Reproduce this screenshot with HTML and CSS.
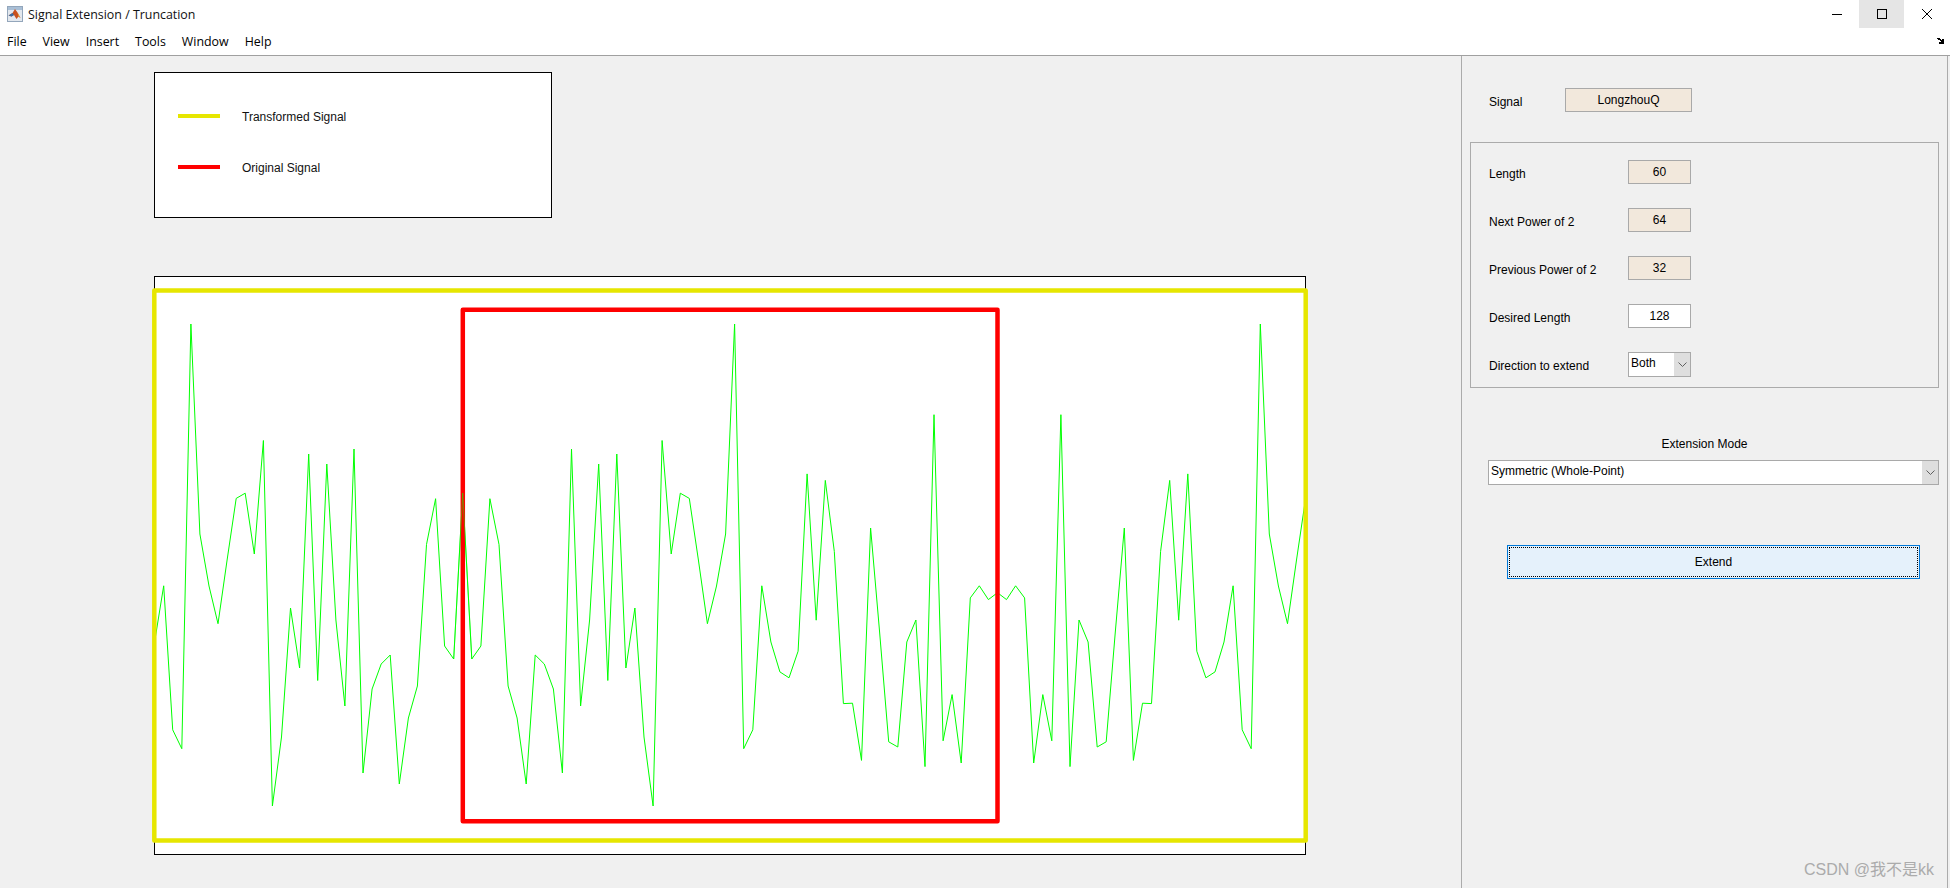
FILE: index.html
```html
<!DOCTYPE html>
<html lang="en">
<head>
    <meta charset="UTF-8">
    <title>Signal Extension / Truncation</title>
    <link rel="stylesheet" href="styles.css">
</head>
<body>

    <div class="titlebar">
        <svg class="app-icon" width="16" height="16" viewBox="0 0 16 16">
            <rect x="0.5" y="0.5" width="15" height="15" fill="#e3e8ee" stroke="#93a6bb"/>
            <rect x="1" y="1" width="14" height="3" fill="#a9bfd6"/>
            <path d="M1.5 9.5 L5.5 7 L8 3 L10.5 6.5 L13.5 12 L11.5 10.5 L9.5 13 L7 9 L4.5 10.5 Z" fill="#c9501c"/>
            <path d="M1.5 9.5 L5.5 7 L7 9 L4.5 10.5 Z" fill="#3a6ea5"/>
            <path d="M10.5 6.5 L13.5 12 L11.5 10.5 Z" fill="#e8a030"/>
        </svg>
        <span class="title-text">Signal Extension / Truncation</span>
        <div class="win-buttons">
            <div class="win-btn">
                <svg width="12" height="12" viewBox="0 0 12 12"><path d="M1 6.5H11" stroke="#000" fill="none"/></svg>
            </div>
            <div class="win-btn hovered">
                <svg width="12" height="12" viewBox="0 0 12 12"><rect x="1.5" y="1.5" width="9" height="9" stroke="#000" fill="none"/></svg>
            </div>
            <div class="win-btn">
                <svg width="12" height="12" viewBox="0 0 12 12"><path d="M1 1L11 11M11 1L1 11" stroke="#000" fill="none"/></svg>
            </div>
        </div>
    </div>

    <div class="menubar">
        <span class="menu-item">File</span>
        <span class="menu-item">View</span>
        <span class="menu-item">Insert</span>
        <span class="menu-item">Tools</span>
        <span class="menu-item">Window</span>
        <span class="menu-item">Help</span>
        <svg class="dock-arrow" width="8" height="7" viewBox="0 0 8 7">
            <path d="M0 0H3V1H4V2H5V1H7V6H2V4H4V3H3V2H1V1H0Z" fill="#000"/>
        </svg>
    </div>

    <div class="main">
        <div class="plots">
            <div class="legend">
                <div class="legend-row">
                    <span class="legend-line yellow"></span>
                    <span>Transformed Signal</span>
                </div>
                <div class="legend-row">
                    <span class="legend-line red"></span>
                    <span>Original Signal</span>
                </div>
            </div>

            <!-- viewBox is in window pixels so the traces can be read straight off the figure -->
            <svg class="axes" width="1153" height="579" viewBox="154 276 1153 579">
                <rect x="154.5" y="276.5" width="1151" height="578" fill="#fff" stroke="#000"/>
                <polyline id="trace" fill="none" stroke="#00ff00" stroke-width="1"/>
                <rect x="154.3" y="290.5" width="1151.4" height="550" fill="none" stroke="#e6e600" stroke-width="4.5" stroke-linejoin="round"/>
                <rect x="462.8" y="309.8" width="534.7" height="511.4" fill="none" stroke="#ff0000" stroke-width="4.5" stroke-linejoin="round"/>
                <!-- the first sample shows through the red edge -->
                <polyline points="453.7,659 462.74,493 471.8,659" fill="none" stroke="#00ff00" stroke-opacity="0.5"/>
            </svg>
        </div>

        <div class="panel">
            <div class="signal-row">
                <span class="signal-label">Signal</span>
                <div class="value-box signal-name">LongzhouQ</div>
            </div>

            <div class="group">
                <div class="row">
                    <span class="row-label">Length</span>
                    <div class="value-box">60</div>
                </div>
                <div class="row">
                    <span class="row-label">Next Power of 2</span>
                    <div class="value-box">64</div>
                </div>
                <div class="row">
                    <span class="row-label">Previous Power of 2</span>
                    <div class="value-box">32</div>
                </div>
                <div class="row">
                    <span class="row-label">Desired Length</span>
                    <div class="value-box editable">128</div>
                </div>
                <div class="row">
                    <span class="row-label">Direction to extend</span>
                    <div class="dropdown small">
                        <span class="dropdown-text">Both</span>
                        <span class="dropdown-arrow">
                            <svg width="9" height="6" viewBox="0 0 9 6"><path d="M0.5 0.5L4.5 4.5L8.5 0.5" fill="none" stroke="#606060"/></svg>
                        </span>
                    </div>
                </div>
            </div>

            <div class="mode-label">Extension Mode</div>
            <div class="dropdown wide">
                <span class="dropdown-text">Symmetric (Whole-Point)</span>
                <span class="dropdown-arrow">
                    <svg width="9" height="6" viewBox="0 0 9 6"><path d="M0.5 0.5L4.5 4.5L8.5 0.5" fill="none" stroke="#606060"/></svg>
                </span>
            </div>

            <button class="extend-btn"><span class="extend-inner">Extend</span></button>
        </div>
    </div>

    <div class="watermark">CSDN @我不是kk</div>

    <script src="script.js"></script>

</body>
</html>
```

FILE: styles.css
```css
* {
    box-sizing: border-box;
}

html, body {
    margin: 0;
    height: 100%;
    overflow: hidden;
}

body {
    width: 1950px;
    height: 888px;
    background: #f0f0f0;
    color: #000;
    font-family: "Liberation Sans", Arial, sans-serif;
    font-size: 12px;
    position: relative;
}

/* Window chrome */
.titlebar {
    height: 28px;
    background: #fff;
    display: flex;
    align-items: center;
    padding-left: 7px;
    font-family: "Open Sans", sans-serif;
    font-size: 12.4px;
}

.app-icon {
    margin-right: 5px;
}

.title-text {
    color: #111;
}

.win-buttons {
    margin-left: auto;
    margin-right: 1px;
    display: flex;
    height: 28px;
}

.win-btn {
    width: 45px;
    display: flex;
    align-items: center;
    justify-content: center;
}

.win-btn.hovered {
    background: #e5e5e5;
}

.menubar {
    height: 28px;
    background: #fff;
    border-bottom: 1px solid #a0a0a0;
    display: flex;
    align-items: center;
    padding: 0 5px 1px 7px;
    font-family: "Open Sans", sans-serif;
    font-size: 12.4px;
}

.menu-item {
    margin-right: 16px;
}

.dock-arrow {
    margin-left: auto;
}

/* Main figure */
.main {
    display: flex;
    height: 832px;
}

.plots {
    width: 1461px;
    padding: 16px 0 0 154px;
}

.legend {
    width: 398px;
    height: 146px;
    background: #fff;
    border: 1px solid #000;
    padding: 34px 0 0 23px;
    display: flex;
    flex-direction: column;
    gap: 31px;
}

.legend-row {
    display: flex;
    align-items: center;
    height: 20px;
    color: #111;
}

.legend-line {
    width: 42px;
    height: 4px;
    margin-right: 22px;
    margin-top: -2px;
}

.legend-line.yellow {
    background: #e6e600;
}

.legend-line.red {
    background: #ff0000;
}

.axes {
    display: block;
    margin-top: 58px;
    overflow: visible;
}

/* Right control panel */
.panel {
    width: 487px;
    border-left: 1px solid #ababab;
    border-right: 1px solid #ababab;
    padding-top: 32px;
}

.signal-row {
    display: flex;
    align-items: center;
    padding-left: 27px;
}

.signal-label {
    width: 76px;
    padding-top: 3px;
}

.value-box {
    width: 63px;
    height: 24px;
    background: #f2e8dc;
    border: 1px solid #a9a9a9;
    display: flex;
    align-items: center;
    justify-content: center;
}

.value-box.signal-name {
    width: 127px;
}

.value-box.editable {
    background: #fff;
}

.group {
    width: 469px;
    height: 246px;
    margin: 30px 0 0 8px;
    border: 1px solid #ababab;
    background: #f0f0f0;
    padding: 17px 0 0 18px;
    display: flex;
    flex-direction: column;
    gap: 24px;
}

.row {
    display: flex;
    align-items: flex-start;
    height: 24px;
}

.row-label {
    width: 139px;
    padding-top: 4px;
    line-height: 21px;
}

.dropdown {
    height: 25px;
    background: #fff;
    border: 1px solid #a9a9a9;
    display: flex;
    align-items: center;
    justify-content: space-between;
    padding-left: 2px;
}

.dropdown.small {
    width: 63px;
}

.dropdown.wide {
    width: 451px;
    margin-left: 26px;
}

.dropdown-text {
    margin-top: -3px;
}

.dropdown-arrow {
    width: 16px;
    height: 100%;
    background: #dedede;
    display: flex;
    align-items: center;
    justify-content: center;
}

.mode-label {
    margin-top: 49px;
    height: 23px;
    text-align: center;
    line-height: 14px;
}

.extend-btn {
    display: block;
    width: 413px;
    height: 34px;
    margin: 60px 0 0 45px;
    padding: 1px;
    background: #e5f1fb;
    border: 1px solid #0078d7;
    font: inherit;
    color: #000;
}

.extend-inner {
    display: flex;
    align-items: center;
    justify-content: center;
    width: 100%;
    height: 100%;
    border: 1px dotted #000;
}

.watermark {
    position: absolute;
    right: 16px;
    bottom: 8px;
    color: #ababab;
    font-family: "Liberation Sans", "Noto Sans CJK SC", sans-serif;
    font-size: 16px;
    white-space: nowrap;
}
```

FILE: script.js
```js
// Original signal (60 samples), y values in window pixels
const signal = [
    493, 659, 646, 498.7, 544.5, 686, 718, 784, 655, 664,
    689, 773, 449, 706, 620, 464, 680.5, 454, 668, 608,
    737, 806, 440.5, 554, 493.2, 498.4, 560, 623.7, 586, 534,
    324, 748.7, 729.8, 585.8, 642, 671.9, 677.8, 651.2, 473.9, 620.2,
    480.4, 551.4, 703.6, 703.2, 760.4, 528, 632, 741.8, 747, 642,
    620, 766.6, 414.7, 740.8, 694.6, 763, 597.9, 585.8, 599.6, 592.7
];

// Symmetric (whole-point) extension to 128 samples, 34 on each side
const extended = [];
for (let i = -34; i < 94; i++) {
    let k = i;
    if (k < 0) k = -k;
    if (k > 59) k = 118 - k;
    extended.push(signal[k]);
}

const startX = 154.6;
const stepX = 9.063;
const points = extended.map((y, i) => `${(startX + i * stepX).toFixed(1)},${y}`);
document.getElementById("trace").setAttribute("points", points.join(" "));
```
